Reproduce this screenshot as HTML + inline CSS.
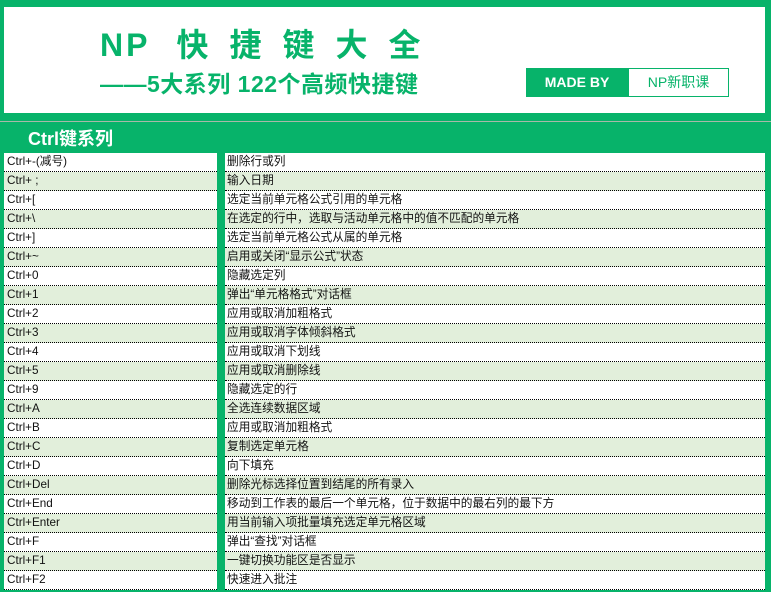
<!DOCTYPE html><html><head><meta charset="utf-8"><style>
*{margin:0;padding:0;box-sizing:border-box}
body{width:771px;height:592px;overflow:hidden;background:#07b36a;font-family:"Liberation Sans","Noto Sans CJK SC",sans-serif;position:relative}
.hd{position:absolute;left:4px;top:7px;width:761px;height:106px;background:#fff}
.t1{position:absolute;left:96px;top:13px;font-size:32px;font-weight:bold;color:#07b36a;white-space:nowrap}
.t1 .n{letter-spacing:3px}
.t1 .c{margin-left:26px;letter-spacing:21px}
.t2{position:absolute;left:96px;top:58px;font-size:23px;font-weight:bold;color:#07b36a;white-space:nowrap;letter-spacing:0.5px}
.mb{position:absolute;left:522px;top:61px;width:102px;height:29px;background:#07b36a;color:#fff;font-weight:bold;font-size:14px;text-align:center;line-height:29px}
.np{position:absolute;left:624px;top:61px;width:101px;height:29px;border:1px solid #07b36a;color:#07b36a;font-size:14px;text-align:center;line-height:27px}
.gl{position:absolute;left:0;top:121px;width:771px;height:1px;background:#a8b8a8}
.sec{position:absolute;left:28px;top:125px;font-size:18px;font-weight:bold;color:#fff}
.tb{position:absolute;top:153px;left:0;width:771px}
.r{height:19px;position:relative}
.a,.b{position:absolute;top:0;height:19px;border-bottom:1px dotted #000;font-size:11.7px;line-height:18px;color:#111;padding-left:3px;white-space:nowrap}
.a{left:4px;width:213px}.b{left:225px;width:540px;padding-left:2px}
.r:nth-child(odd) .a,.r:nth-child(odd) .b{background:#fff}
.r:nth-child(even) .a,.r:nth-child(even) .b{background:#e2efdb}
</style></head><body>
<div class="hd"><div class="t1"><span class="n">NP</span><span class="c">快捷键大全</span></div><div class="t2">——5大系列 122个高频快捷键</div><div class="mb">MADE BY</div><div class="np">NP新职课</div></div>
<div class="gl"></div>
<div class="sec">Ctrl键系列</div>
<div class="tb">
<div class="r"><div class="a">Ctrl+-(减号)</div><div class="b">删除行或列</div></div>
<div class="r"><div class="a">Ctrl+ ;</div><div class="b">输入日期</div></div>
<div class="r"><div class="a">Ctrl+[</div><div class="b">选定当前单元格公式引用的单元格</div></div>
<div class="r"><div class="a">Ctrl+\</div><div class="b">在选定的行中，选取与活动单元格中的值不匹配的单元格</div></div>
<div class="r"><div class="a">Ctrl+]</div><div class="b">选定当前单元格公式从属的单元格</div></div>
<div class="r"><div class="a">Ctrl+~</div><div class="b">启用或关闭“显示公式”状态</div></div>
<div class="r"><div class="a">Ctrl+0</div><div class="b">隐藏选定列</div></div>
<div class="r"><div class="a">Ctrl+1</div><div class="b">弹出“单元格格式”对话框</div></div>
<div class="r"><div class="a">Ctrl+2</div><div class="b">应用或取消加粗格式</div></div>
<div class="r"><div class="a">Ctrl+3</div><div class="b">应用或取消字体倾斜格式</div></div>
<div class="r"><div class="a">Ctrl+4</div><div class="b">应用或取消下划线</div></div>
<div class="r"><div class="a">Ctrl+5</div><div class="b">应用或取消删除线</div></div>
<div class="r"><div class="a">Ctrl+9</div><div class="b">隐藏选定的行</div></div>
<div class="r"><div class="a">Ctrl+A</div><div class="b">全选连续数据区域</div></div>
<div class="r"><div class="a">Ctrl+B</div><div class="b">应用或取消加粗格式</div></div>
<div class="r"><div class="a">Ctrl+C</div><div class="b">复制选定单元格</div></div>
<div class="r"><div class="a">Ctrl+D</div><div class="b">向下填充</div></div>
<div class="r"><div class="a">Ctrl+Del</div><div class="b">删除光标选择位置到结尾的所有录入</div></div>
<div class="r"><div class="a">Ctrl+End</div><div class="b">移动到工作表的最后一个单元格，位于数据中的最右列的最下方</div></div>
<div class="r"><div class="a">Ctrl+Enter</div><div class="b">用当前输入项批量填充选定单元格区域</div></div>
<div class="r"><div class="a">Ctrl+F</div><div class="b">弹出“查找”对话框</div></div>
<div class="r"><div class="a">Ctrl+F1</div><div class="b">一键切换功能区是否显示</div></div>
<div class="r"><div class="a">Ctrl+F2</div><div class="b">快速进入批注</div></div>
</div>
</body></html>
